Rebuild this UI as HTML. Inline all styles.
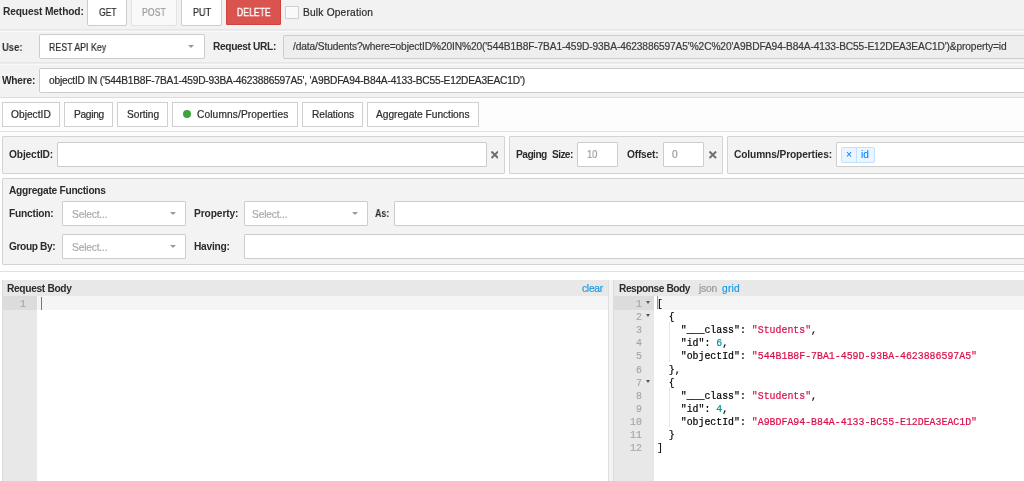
<!DOCTYPE html><html><head><meta charset="utf-8"><style>
html,body{margin:0;padding:0;width:1024px;height:481px;overflow:hidden;background:#fff}
.b{position:absolute;box-sizing:border-box}
.t{position:absolute;white-space:pre;will-change:transform}
</style></head><body>
<div class="b" style="left:0px;top:0px;width:1024.00px;height:97.00px;background:#f2f2f2;"></div>
<div class="b" style="left:0px;top:29px;width:1024.00px;height:1.00px;background:#e6e6e6;"></div>
<div class="b" style="left:0px;top:30px;width:1024.00px;height:1.00px;background:#ececec;"></div>
<div class="b" style="left:0px;top:31px;width:1024.00px;height:1.00px;background:#f9f9f9;"></div>
<div class="b" style="left:0px;top:62px;width:1024.00px;height:1.00px;background:#e6e6e6;"></div>
<div class="b" style="left:0px;top:63px;width:1024.00px;height:1.00px;background:#ececec;"></div>
<div class="b" style="left:0px;top:64px;width:1024.00px;height:1.00px;background:#f9f9f9;"></div>
<div class="b" style="left:0px;top:97px;width:1024.00px;height:1.00px;background:#dddddd;"></div>
<div class="t" style="left:2.60px;top:7px;font-size:10.2px;line-height:10.2px;font-weight:700;color:#2b2b2b;letter-spacing:-0.131px;font-family:'Liberation Sans', sans-serif;">Request Method:</div>
<div class="b" style="left:87px;top:-3px;width:40.00px;height:29.00px;background:#fff;border:1px solid #ccc;border-radius:2px;"></div>
<div class="t" style="left:98.90px;top:8px;font-size:10.2px;line-height:10.2px;font-weight:400;color:#2b2b2b;letter-spacing:0.000px;font-family:'Liberation Sans', sans-serif;transform:scaleX(0.8350);transform-origin:0.00px 0;-webkit-text-stroke:0.2px currentColor;">GET</div>
<div class="b" style="left:131px;top:-3px;width:46.00px;height:29.00px;background:#f9f9f9;border:1px solid #e2e2e2;border-radius:2px;"></div>
<div class="t" style="left:142.40px;top:8px;font-size:10.2px;line-height:10.2px;font-weight:400;color:#999;letter-spacing:0.000px;font-family:'Liberation Sans', sans-serif;transform:scaleX(0.8577);transform-origin:0.00px 0;-webkit-text-stroke:0.2px currentColor;">POST</div>
<div class="b" style="left:181px;top:-3px;width:41.00px;height:29.00px;background:#fff;border:1px solid #ccc;border-radius:2px;"></div>
<div class="t" style="left:192.60px;top:8px;font-size:10.2px;line-height:10.2px;font-weight:400;color:#2b2b2b;letter-spacing:0.000px;font-family:'Liberation Sans', sans-serif;transform:scaleX(0.8833);transform-origin:0.00px 0;-webkit-text-stroke:0.2px currentColor;">PUT</div>
<div class="b" style="left:226px;top:-3px;width:55.00px;height:28.00px;background:#d9534f;border:1px solid #d43f3a;border-radius:1px;"></div>
<div class="t" style="left:236.60px;top:8px;font-size:10.2px;line-height:10.2px;font-weight:400;color:#fff;letter-spacing:0.000px;font-family:'Liberation Sans', sans-serif;transform:scaleX(0.8510);transform-origin:0.00px 0;-webkit-text-stroke:0.35px currentColor;">DELETE</div>
<div class="b" style="left:285px;top:6px;width:14.00px;height:13.00px;background:#f9f9f9;border:1px solid #cfcfcf;border-radius:1px;"></div>
<div class="t" style="left:303.00px;top:8px;font-size:10.2px;line-height:10.2px;font-weight:400;color:#2b2b2b;letter-spacing:0.198px;font-family:'Liberation Sans', sans-serif;-webkit-text-stroke:0.2px currentColor;">Bulk Operation</div>
<div class="t" style="left:2.40px;top:43px;font-size:10.2px;line-height:10.2px;font-weight:700;color:#2b2b2b;letter-spacing:0.000px;font-family:'Liberation Sans', sans-serif;transform:scaleX(0.9268);transform-origin:0.00px 0;">Use:</div>
<div class="b" style="left:39px;top:34px;width:166.00px;height:25.00px;background:#fff;border:1px solid #ccc;border-radius:2px;"></div>
<div class="t" style="left:48.80px;top:43px;font-size:10.2px;line-height:10.2px;font-weight:400;color:#2b2b2b;letter-spacing:0.000px;font-family:'Liberation Sans', sans-serif;transform:scaleX(0.8654);transform-origin:0.00px 0;-webkit-text-stroke:0.2px currentColor;">REST API Key</div>
<div class="b" style="left:188.2px;top:45.0px;width:0;height:0;border-left:3px solid transparent;border-right:3px solid transparent;border-top:3px solid #999"></div>
<div class="t" style="left:212.50px;top:42px;font-size:10.2px;line-height:10.2px;font-weight:700;color:#2b2b2b;letter-spacing:-0.369px;font-family:'Liberation Sans', sans-serif;">Request URL:</div>
<div class="b" style="left:283px;top:35px;width:748.00px;height:24.00px;background:#eeeeee;border:1px solid #cccccc;border-radius:2px;"></div>
<div class="t" style="left:292.50px;top:42px;font-size:10.2px;line-height:10.2px;font-weight:400;color:#3a3a3a;letter-spacing:-0.119px;font-family:'Liberation Sans', sans-serif;-webkit-text-stroke:0.2px currentColor;">/data/Students?where=objectID%20IN%20('544B1B8F-7BA1-459D-93BA-4623886597A5'%2C%20'A9BDFA94-B84A-4133-BC55-E12DEA3EAC1D')&amp;property=id</div>
<div class="t" style="left:2.30px;top:76px;font-size:10.2px;line-height:10.2px;font-weight:700;color:#2b2b2b;letter-spacing:-0.247px;font-family:'Liberation Sans', sans-serif;">Where:</div>
<div class="b" style="left:39px;top:68px;width:992.00px;height:25.00px;background:#fff;border:1px solid #ccc;border-radius:2px;"></div>
<div class="t" style="left:48.60px;top:76px;font-size:10.2px;line-height:10.2px;font-weight:400;color:#2b2b2b;letter-spacing:-0.200px;font-family:'Liberation Sans', sans-serif;-webkit-text-stroke:0.2px currentColor;">objectID IN ('544B1B8F-7BA1-459D-93BA-4623886597A5', 'A9BDFA94-B84A-4133-BC55-E12DEA3EAC1D')</div>
<div class="b" style="left:0px;top:98px;width:1024.00px;height:383.00px;background:#fdfdfd;"></div>
<div class="b" style="left:2px;top:102px;width:58.00px;height:25.00px;background:#fff;border:1px solid #cfcfcf;border-radius:0px;"></div>
<div class="t" style="left:11.40px;top:110px;font-size:10.2px;line-height:10.2px;font-weight:400;color:#2b2b2b;letter-spacing:0.018px;font-family:'Liberation Sans', sans-serif;-webkit-text-stroke:0.2px currentColor;">ObjectID</div>
<div class="b" style="left:64px;top:102px;width:49.00px;height:25.00px;background:#fff;border:1px solid #cfcfcf;border-radius:0px;"></div>
<div class="t" style="left:73.60px;top:110px;font-size:10.2px;line-height:10.2px;font-weight:400;color:#2b2b2b;letter-spacing:-0.311px;font-family:'Liberation Sans', sans-serif;-webkit-text-stroke:0.2px currentColor;">Paging</div>
<div class="b" style="left:117px;top:102px;width:51.00px;height:25.00px;background:#fff;border:1px solid #cfcfcf;border-radius:0px;"></div>
<div class="t" style="left:126.70px;top:110px;font-size:10.2px;line-height:10.2px;font-weight:400;color:#2b2b2b;letter-spacing:-0.019px;font-family:'Liberation Sans', sans-serif;-webkit-text-stroke:0.2px currentColor;">Sorting</div>
<div class="b" style="left:172px;top:102px;width:126.00px;height:25.00px;background:#fff;border:1px solid #cfcfcf;border-radius:0px;"></div>
<div class="t" style="left:196.80px;top:110px;font-size:10.2px;line-height:10.2px;font-weight:400;color:#2b2b2b;letter-spacing:0.108px;font-family:'Liberation Sans', sans-serif;-webkit-text-stroke:0.2px currentColor;">Columns/Properties</div>
<div class="b" style="left:302px;top:102px;width:61.00px;height:25.00px;background:#fff;border:1px solid #cfcfcf;border-radius:0px;"></div>
<div class="t" style="left:311.50px;top:110px;font-size:10.2px;line-height:10.2px;font-weight:400;color:#2b2b2b;letter-spacing:-0.047px;font-family:'Liberation Sans', sans-serif;-webkit-text-stroke:0.2px currentColor;">Relations</div>
<div class="b" style="left:367px;top:102px;width:112.00px;height:25.00px;background:#fff;border:1px solid #cfcfcf;border-radius:0px;"></div>
<div class="t" style="left:375.90px;top:110px;font-size:10.2px;line-height:10.2px;font-weight:400;color:#2b2b2b;letter-spacing:-0.029px;font-family:'Liberation Sans', sans-serif;-webkit-text-stroke:0.2px currentColor;">Aggregate Functions</div>
<div class="b" style="left:183px;top:110px;width:8px;height:8px;border-radius:50%;background:#3ba53b"></div>
<div class="b" style="left:0px;top:131px;width:1024.00px;height:1.00px;background:#e0e0e0;"></div>
<div class="b" style="left:2px;top:136px;width:503.00px;height:38.00px;background:#f3f3f3;border:1px solid #d3d3d3;border-radius:1px;"></div>
<div class="t" style="left:8.60px;top:150px;font-size:10.2px;line-height:10.2px;font-weight:700;color:#2b2b2b;letter-spacing:-0.136px;font-family:'Liberation Sans', sans-serif;">ObjectID:</div>
<div class="b" style="left:57px;top:142px;width:430.00px;height:25.00px;background:#fff;border:1px solid #ccc;border-radius:1px;"></div>
<svg class="b" style="left:490.5px;top:151.0px" width="7.6" height="7.6" viewBox="0 0 7.6 7.6"><path d="M0.5 0.5L7.1 7.1M7.1 0.5L0.5 7.1" stroke="#6e6e6e" stroke-width="2.0"/></svg>
<div class="b" style="left:509px;top:136px;width:214.00px;height:38.00px;background:#f3f3f3;border:1px solid #d3d3d3;border-radius:1px;"></div>
<div class="t" style="left:516.10px;top:150px;font-size:10.2px;line-height:10.2px;font-weight:700;color:#2b2b2b;letter-spacing:-0.527px;font-family:'Liberation Sans', sans-serif;">Paging</div>
<div class="t" style="left:551.90px;top:150px;font-size:10.2px;line-height:10.2px;font-weight:700;color:#2b2b2b;letter-spacing:-0.621px;font-family:'Liberation Sans', sans-serif;">Size:</div>
<div class="b" style="left:577px;top:142px;width:41.00px;height:25.00px;background:#fff;border:1px solid #ccc;border-radius:1px;"></div>
<div class="t" style="left:586.60px;top:150px;font-size:10.2px;line-height:10.2px;font-weight:400;color:#999;letter-spacing:0.000px;font-family:'Liberation Sans', sans-serif;transform:scaleX(0.9001);transform-origin:0.00px 0;-webkit-text-stroke:0.2px currentColor;">10</div>
<div class="t" style="left:627.00px;top:150px;font-size:10.2px;line-height:10.2px;font-weight:700;color:#2b2b2b;letter-spacing:-0.206px;font-family:'Liberation Sans', sans-serif;">Offset:</div>
<div class="b" style="left:663px;top:142px;width:41.00px;height:25.00px;background:#fff;border:1px solid #ccc;border-radius:1px;"></div>
<div class="t" style="left:671.90px;top:150px;font-size:10.2px;line-height:10.2px;font-weight:400;color:#999;letter-spacing:0.000px;font-family:'Liberation Sans', sans-serif;-webkit-text-stroke:0.2px currentColor;">0</div>
<svg class="b" style="left:709.0px;top:151.0px" width="7.6" height="7.6" viewBox="0 0 7.6 7.6"><path d="M0.5 0.5L7.1 7.1M7.1 0.5L0.5 7.1" stroke="#6e6e6e" stroke-width="2.0"/></svg>
<div class="b" style="left:727px;top:136px;width:304.00px;height:38.00px;background:#f3f3f3;border:1px solid #d3d3d3;border-radius:1px;"></div>
<div class="t" style="left:734.30px;top:150px;font-size:10.2px;line-height:10.2px;font-weight:700;color:#2b2b2b;letter-spacing:-0.117px;font-family:'Liberation Sans', sans-serif;">Columns/Properties:</div>
<div class="b" style="left:836px;top:142px;width:195.00px;height:25.00px;background:#fff;border:1px solid #ccc;border-radius:1px;"></div>
<div class="b" style="left:841px;top:147px;width:34.00px;height:16.00px;background:#ebf5ff;border:1px solid #c2e0ff;border-radius:2px;"></div>
<div class="b" style="left:856px;top:148px;width:1.00px;height:14.00px;background:#c2e0ff;"></div>
<div class="t" style="left:845.70px;top:150px;font-size:10.2px;line-height:10.2px;font-weight:400;color:#007eff;letter-spacing:0.000px;font-family:'Liberation Sans', sans-serif;-webkit-text-stroke:0.1px currentColor;">×</div>
<div class="t" style="left:861.00px;top:150px;font-size:10.2px;line-height:10.2px;font-weight:400;color:#007eff;letter-spacing:-0.063px;font-family:'Liberation Sans', sans-serif;-webkit-text-stroke:0.05px currentColor;">id</div>
<div class="b" style="left:2px;top:178px;width:1029.00px;height:87.00px;background:#f3f3f3;border:1px solid #d3d3d3;border-radius:1px;"></div>
<div class="t" style="left:8.70px;top:186px;font-size:10.2px;line-height:10.2px;font-weight:700;color:#2b2b2b;letter-spacing:-0.273px;font-family:'Liberation Sans', sans-serif;">Aggregate Functions</div>
<div class="t" style="left:8.70px;top:209px;font-size:10.2px;line-height:10.2px;font-weight:700;color:#2b2b2b;letter-spacing:-0.213px;font-family:'Liberation Sans', sans-serif;">Function:</div>
<div class="b" style="left:62px;top:201px;width:124.00px;height:25.00px;background:#fff;border:1px solid #ccc;border-radius:1px;"></div>
<div class="t" style="left:71.50px;top:210px;font-size:10.2px;line-height:10.2px;font-weight:400;color:#aaa;letter-spacing:-0.159px;font-family:'Liberation Sans', sans-serif;-webkit-text-stroke:0.2px currentColor;">Select...</div>
<div class="b" style="left:170px;top:212.0px;width:0;height:0;border-left:3px solid transparent;border-right:3px solid transparent;border-top:3px solid #999"></div>
<div class="t" style="left:194.40px;top:209px;font-size:10.2px;line-height:10.2px;font-weight:700;color:#2b2b2b;letter-spacing:-0.099px;font-family:'Liberation Sans', sans-serif;">Property:</div>
<div class="b" style="left:244px;top:201px;width:124.00px;height:25.00px;background:#fff;border:1px solid #ccc;border-radius:1px;"></div>
<div class="t" style="left:252.30px;top:210px;font-size:10.2px;line-height:10.2px;font-weight:400;color:#aaa;letter-spacing:-0.159px;font-family:'Liberation Sans', sans-serif;-webkit-text-stroke:0.2px currentColor;">Select...</div>
<div class="b" style="left:351.5px;top:212.0px;width:0;height:0;border-left:3px solid transparent;border-right:3px solid transparent;border-top:3px solid #999"></div>
<div class="t" style="left:375.40px;top:209px;font-size:10.2px;line-height:10.2px;font-weight:700;color:#2b2b2b;letter-spacing:0.000px;font-family:'Liberation Sans', sans-serif;transform:scaleX(0.8738);transform-origin:0.00px 0;">As:</div>
<div class="b" style="left:394px;top:201px;width:637.00px;height:25.00px;background:#fff;border:1px solid #ccc;border-radius:1px;"></div>
<div class="t" style="left:8.80px;top:242px;font-size:10.2px;line-height:10.2px;font-weight:700;color:#2b2b2b;letter-spacing:-0.389px;font-family:'Liberation Sans', sans-serif;">Group By:</div>
<div class="b" style="left:62px;top:234px;width:124.00px;height:25.00px;background:#fff;border:1px solid #ccc;border-radius:1px;"></div>
<div class="t" style="left:71.50px;top:243px;font-size:10.2px;line-height:10.2px;font-weight:400;color:#aaa;letter-spacing:-0.159px;font-family:'Liberation Sans', sans-serif;-webkit-text-stroke:0.2px currentColor;">Select...</div>
<div class="b" style="left:170px;top:245.0px;width:0;height:0;border-left:3px solid transparent;border-right:3px solid transparent;border-top:3px solid #999"></div>
<div class="t" style="left:194.40px;top:242px;font-size:10.2px;line-height:10.2px;font-weight:700;color:#2b2b2b;letter-spacing:-0.261px;font-family:'Liberation Sans', sans-serif;">Having:</div>
<div class="b" style="left:244px;top:234px;width:787.00px;height:25.00px;background:#fff;border:1px solid #ccc;border-radius:1px;"></div>
<div class="b" style="left:0px;top:271px;width:1024.00px;height:1.00px;background:#e0e0e0;"></div>
<div class="b" style="left:0px;top:272px;width:1024.00px;height:209.00px;background:#ffffff;"></div>
<div class="b" style="left:2px;top:280px;width:607.00px;height:16.00px;background:#e8e8e8;"></div>
<div class="t" style="left:7.40px;top:284px;font-size:10.2px;line-height:10.2px;font-weight:700;color:#2b2b2b;letter-spacing:-0.330px;font-family:'Liberation Sans', sans-serif;">Request Body</div>
<div class="t" style="left:581.80px;top:284px;font-size:10.2px;line-height:10.2px;font-weight:400;color:#1b9ae0;letter-spacing:-0.222px;font-family:'Liberation Sans', sans-serif;-webkit-text-stroke:0.2px currentColor;">clear</div>
<div class="b" style="left:2px;top:296px;width:35.00px;height:185.00px;background:#e8e8e8;"></div>
<div class="b" style="left:37px;top:296px;width:571.00px;height:185.00px;background:#fff;"></div>
<div class="b" style="left:2px;top:296px;width:35.00px;height:14.00px;background:#dcdcdc;"></div>
<div class="b" style="left:37px;top:296px;width:571.00px;height:14.00px;background:#f5f5f5;"></div>
<div class="b" style="left:40.5px;top:296.5px;width:1.00px;height:13.00px;background:#777;"></div>
<div class="t" style="left:19.80px;top:300px;font-size:9.9px;line-height:9.9px;font-weight:400;color:#a6a6a6;letter-spacing:0.000px;font-family:'Liberation Mono', monospace;-webkit-text-stroke:0.15px currentColor;transform:scaleY(1.14);transform-origin:0 7px;">1</div>
<div class="b" style="left:2px;top:280px;width:1.00px;height:201.00px;background:#dcdcdc;"></div>
<div class="b" style="left:608px;top:280px;width:1.00px;height:201.00px;background:#e0e0e0;"></div>
<div class="b" style="left:609px;top:280px;width:4.00px;height:201.00px;background:#f3f3f3;"></div>
<div class="b" style="left:613px;top:280px;width:411.00px;height:16.00px;background:#e8e8e8;"></div>
<div class="b" style="left:613px;top:280px;width:1.00px;height:201.00px;background:#dcdcdc;"></div>
<div class="t" style="left:618.80px;top:284px;font-size:10.2px;line-height:10.2px;font-weight:700;color:#2b2b2b;letter-spacing:-0.460px;font-family:'Liberation Sans', sans-serif;">Response Body</div>
<div class="t" style="left:698.60px;top:284px;font-size:10.2px;line-height:10.2px;font-weight:400;color:#999;letter-spacing:-0.141px;font-family:'Liberation Sans', sans-serif;-webkit-text-stroke:0.2px currentColor;">json</div>
<div class="t" style="left:722.00px;top:284px;font-size:10.2px;line-height:10.2px;font-weight:400;color:#1b9ae0;letter-spacing:0.226px;font-family:'Liberation Sans', sans-serif;-webkit-text-stroke:0.2px currentColor;">grid</div>
<div class="b" style="left:614px;top:296px;width:40.00px;height:185.00px;background:#e8e8e8;"></div>
<div class="b" style="left:654px;top:296px;width:370.00px;height:185.00px;background:#fff;"></div>
<div class="b" style="left:614px;top:296px;width:40.00px;height:14.00px;background:#dcdcdc;"></div>
<div class="b" style="left:657px;top:296px;width:367.00px;height:14.00px;background:#f5f5f5;"></div>
<div class="t" style="left:636.36px;top:300px;font-size:9.9px;line-height:9.9px;font-weight:400;color:#a6a6a6;letter-spacing:0.000px;font-family:'Liberation Mono', monospace;-webkit-text-stroke:0.15px currentColor;transform:scaleY(1.14);transform-origin:0 7px;">1</div>
<div class="t" style="left:657.30px;top:300px;font-size:9.9px;line-height:9.9px;font-weight:400;color:#000;letter-spacing:0.000px;font-family:'Liberation Mono', monospace;-webkit-text-stroke:0.2px currentColor;transform:scaleY(1.14);transform-origin:0 7px;">[</div>
<div class="t" style="left:636.36px;top:313px;font-size:9.9px;line-height:9.9px;font-weight:400;color:#a6a6a6;letter-spacing:0.000px;font-family:'Liberation Mono', monospace;-webkit-text-stroke:0.15px currentColor;transform:scaleY(1.14);transform-origin:0 7px;">2</div>
<div class="t" style="left:657.30px;top:313px;font-size:9.9px;line-height:9.9px;font-weight:400;color:#000;letter-spacing:0.000px;font-family:'Liberation Mono', monospace;-webkit-text-stroke:0.2px currentColor;transform:scaleY(1.14);transform-origin:0 7px;">  {</div>
<div class="t" style="left:636.36px;top:326px;font-size:9.9px;line-height:9.9px;font-weight:400;color:#a6a6a6;letter-spacing:0.000px;font-family:'Liberation Mono', monospace;-webkit-text-stroke:0.15px currentColor;transform:scaleY(1.14);transform-origin:0 7px;">3</div>
<div class="t" style="left:657.30px;top:326px;font-size:9.9px;line-height:9.9px;font-weight:400;color:#000;letter-spacing:0.000px;font-family:'Liberation Mono', monospace;-webkit-text-stroke:0.2px currentColor;transform:scaleY(1.14);transform-origin:0 7px;">    "___class": <span style="color:#d8104a">"Students"</span>,</div>
<div class="t" style="left:636.36px;top:339px;font-size:9.9px;line-height:9.9px;font-weight:400;color:#a6a6a6;letter-spacing:0.000px;font-family:'Liberation Mono', monospace;-webkit-text-stroke:0.15px currentColor;transform:scaleY(1.14);transform-origin:0 7px;">4</div>
<div class="t" style="left:657.30px;top:339px;font-size:9.9px;line-height:9.9px;font-weight:400;color:#000;letter-spacing:0.000px;font-family:'Liberation Mono', monospace;-webkit-text-stroke:0.2px currentColor;transform:scaleY(1.14);transform-origin:0 7px;">    "id": <span style="color:#099">6</span>,</div>
<div class="t" style="left:636.36px;top:352px;font-size:9.9px;line-height:9.9px;font-weight:400;color:#a6a6a6;letter-spacing:0.000px;font-family:'Liberation Mono', monospace;-webkit-text-stroke:0.15px currentColor;transform:scaleY(1.14);transform-origin:0 7px;">5</div>
<div class="t" style="left:657.30px;top:352px;font-size:9.9px;line-height:9.9px;font-weight:400;color:#000;letter-spacing:0.000px;font-family:'Liberation Mono', monospace;-webkit-text-stroke:0.2px currentColor;transform:scaleY(1.14);transform-origin:0 7px;">    "objectId": <span style="color:#d8104a">"544B1B8F-7BA1-459D-93BA-4623886597A5"</span></div>
<div class="t" style="left:636.36px;top:366px;font-size:9.9px;line-height:9.9px;font-weight:400;color:#a6a6a6;letter-spacing:0.000px;font-family:'Liberation Mono', monospace;-webkit-text-stroke:0.15px currentColor;transform:scaleY(1.14);transform-origin:0 7px;">6</div>
<div class="t" style="left:657.30px;top:366px;font-size:9.9px;line-height:9.9px;font-weight:400;color:#000;letter-spacing:0.000px;font-family:'Liberation Mono', monospace;-webkit-text-stroke:0.2px currentColor;transform:scaleY(1.14);transform-origin:0 7px;">  },</div>
<div class="t" style="left:636.36px;top:379px;font-size:9.9px;line-height:9.9px;font-weight:400;color:#a6a6a6;letter-spacing:0.000px;font-family:'Liberation Mono', monospace;-webkit-text-stroke:0.15px currentColor;transform:scaleY(1.14);transform-origin:0 7px;">7</div>
<div class="t" style="left:657.30px;top:379px;font-size:9.9px;line-height:9.9px;font-weight:400;color:#000;letter-spacing:0.000px;font-family:'Liberation Mono', monospace;-webkit-text-stroke:0.2px currentColor;transform:scaleY(1.14);transform-origin:0 7px;">  {</div>
<div class="t" style="left:636.36px;top:392px;font-size:9.9px;line-height:9.9px;font-weight:400;color:#a6a6a6;letter-spacing:0.000px;font-family:'Liberation Mono', monospace;-webkit-text-stroke:0.15px currentColor;transform:scaleY(1.14);transform-origin:0 7px;">8</div>
<div class="t" style="left:657.30px;top:392px;font-size:9.9px;line-height:9.9px;font-weight:400;color:#000;letter-spacing:0.000px;font-family:'Liberation Mono', monospace;-webkit-text-stroke:0.2px currentColor;transform:scaleY(1.14);transform-origin:0 7px;">    "___class": <span style="color:#d8104a">"Students"</span>,</div>
<div class="t" style="left:636.36px;top:405px;font-size:9.9px;line-height:9.9px;font-weight:400;color:#a6a6a6;letter-spacing:0.000px;font-family:'Liberation Mono', monospace;-webkit-text-stroke:0.15px currentColor;transform:scaleY(1.14);transform-origin:0 7px;">9</div>
<div class="t" style="left:657.30px;top:405px;font-size:9.9px;line-height:9.9px;font-weight:400;color:#000;letter-spacing:0.000px;font-family:'Liberation Mono', monospace;-webkit-text-stroke:0.2px currentColor;transform:scaleY(1.14);transform-origin:0 7px;">    "id": <span style="color:#099">4</span>,</div>
<div class="t" style="left:630.42px;top:418px;font-size:9.9px;line-height:9.9px;font-weight:400;color:#a6a6a6;letter-spacing:0.000px;font-family:'Liberation Mono', monospace;-webkit-text-stroke:0.15px currentColor;transform:scaleY(1.14);transform-origin:0 7px;">10</div>
<div class="t" style="left:657.30px;top:418px;font-size:9.9px;line-height:9.9px;font-weight:400;color:#000;letter-spacing:0.000px;font-family:'Liberation Mono', monospace;-webkit-text-stroke:0.2px currentColor;transform:scaleY(1.14);transform-origin:0 7px;">    "objectId": <span style="color:#d8104a">"A9BDFA94-B84A-4133-BC55-E12DEA3EAC1D"</span></div>
<div class="t" style="left:630.42px;top:431px;font-size:9.9px;line-height:9.9px;font-weight:400;color:#a6a6a6;letter-spacing:0.000px;font-family:'Liberation Mono', monospace;-webkit-text-stroke:0.15px currentColor;transform:scaleY(1.14);transform-origin:0 7px;">11</div>
<div class="t" style="left:657.30px;top:431px;font-size:9.9px;line-height:9.9px;font-weight:400;color:#000;letter-spacing:0.000px;font-family:'Liberation Mono', monospace;-webkit-text-stroke:0.2px currentColor;transform:scaleY(1.14);transform-origin:0 7px;">  }</div>
<div class="t" style="left:630.42px;top:444px;font-size:9.9px;line-height:9.9px;font-weight:400;color:#a6a6a6;letter-spacing:0.000px;font-family:'Liberation Mono', monospace;-webkit-text-stroke:0.15px currentColor;transform:scaleY(1.14);transform-origin:0 7px;">12</div>
<div class="t" style="left:657.30px;top:444px;font-size:9.9px;line-height:9.9px;font-weight:400;color:#000;letter-spacing:0.000px;font-family:'Liberation Mono', monospace;-webkit-text-stroke:0.2px currentColor;transform:scaleY(1.14);transform-origin:0 7px;">]</div>
<div class="b" style="left:645.9px;top:301.0px;width:0;height:0;border-left:2.6px solid transparent;border-right:2.6px solid transparent;border-top:3.2px solid #555"></div>
<div class="b" style="left:645.9px;top:314.15px;width:0;height:0;border-left:2.6px solid transparent;border-right:2.6px solid transparent;border-top:3.2px solid #555"></div>
<div class="b" style="left:645.9px;top:379.9px;width:0;height:0;border-left:2.6px solid transparent;border-right:2.6px solid transparent;border-top:3.2px solid #555"></div>
<div class="b" style="left:657.2px;top:296.3px;width:1.00px;height:13.20px;background:#999;"></div>
<div class="b" style="left:668.5px;top:322.3px;width:1.00px;height:13.15px;background:#e6e6e6;"></div>
<div class="b" style="left:668.5px;top:335.45px;width:1.00px;height:13.15px;background:#e6e6e6;"></div>
<div class="b" style="left:668.5px;top:348.6px;width:1.00px;height:13.15px;background:#e6e6e6;"></div>
<div class="b" style="left:668.5px;top:388.05px;width:1.00px;height:13.15px;background:#e6e6e6;"></div>
<div class="b" style="left:668.5px;top:401.2px;width:1.00px;height:13.15px;background:#e6e6e6;"></div>
<div class="b" style="left:668.5px;top:414.35px;width:1.00px;height:13.15px;background:#e6e6e6;"></div>
</body></html>
